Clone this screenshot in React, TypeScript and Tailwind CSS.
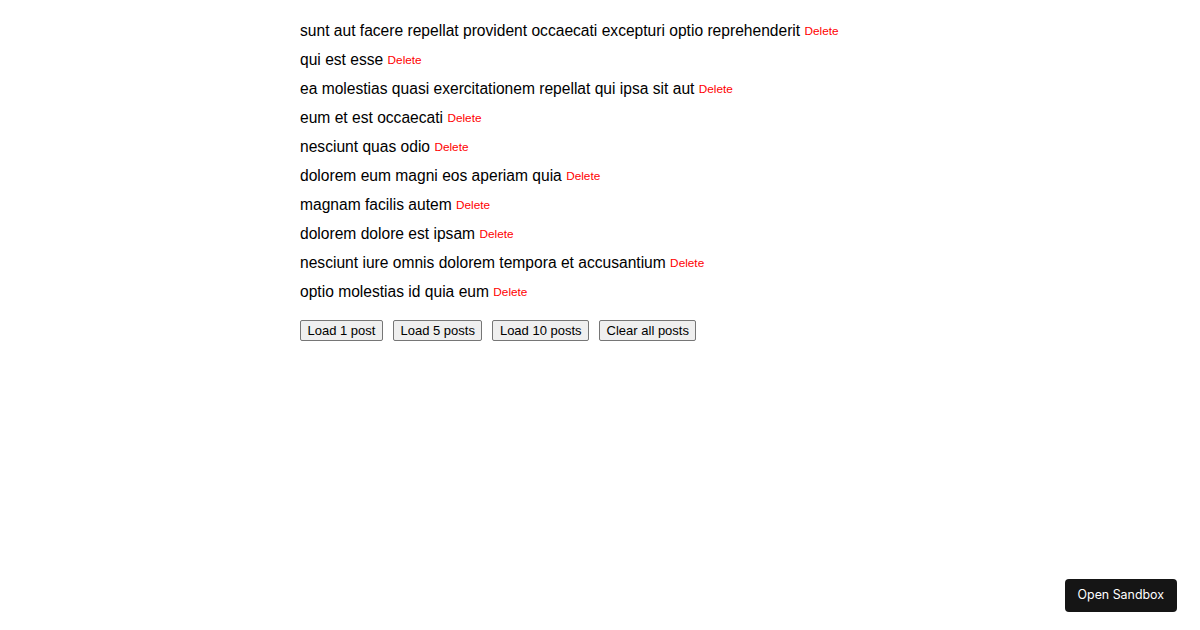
const posts = [
  "sunt aut facere repellat provident occaecati excepturi optio reprehenderit",
  "qui est esse",
  "ea molestias quasi exercitationem repellat qui ipsa sit aut",
  "eum et est occaecati",
  "nesciunt quas odio",
  "dolorem eum magni eos aperiam quia",
  "magnam facilis autem",
  "dolorem dolore est ipsam",
  "nesciunt iure omnis dolorem tempora et accusantium",
  "optio molestias id quia eum",
];

const buttons = ["Load 1 post", "Load 5 posts", "Load 10 posts", "Clear all posts"];

export default function App() {
  return (
    <div className="relative min-h-[630px] bg-white font-['Liberation_Sans',Arial,sans-serif] text-black">
      <div className="mx-auto w-[600px] pt-[16px]">
        {/* POSTS */}
        <ul>
          {posts.map((title) => (
            <li key={title} className="h-[29px] text-[15.6px] leading-[29px]">
              {title}{" "}
              <button className="cursor-pointer align-[1px] text-[11.8px] leading-none text-[#ff0000]">
                Delete
              </button>
            </li>
          ))}
        </ul>

        {/* ACTIONS */}
        <div className="mt-[14px] flex gap-[10px]">
          {buttons.map((label) => (
            <button
              key={label}
              className="h-[21px] rounded-[2px] border border-[#767676] bg-[#efefef] px-[6.5px] text-[13px] leading-none"
            >
              {label}
            </button>
          ))}
        </div>
      </div>

      {/* FLOATING */}
      <button className="fixed bottom-[18px] right-[23px] h-[33px] rounded-[4px] bg-[#151515] px-[13px] font-['Inter',sans-serif] text-[12.4px] text-white">
        Open Sandbox
      </button>
    </div>
  );
}
